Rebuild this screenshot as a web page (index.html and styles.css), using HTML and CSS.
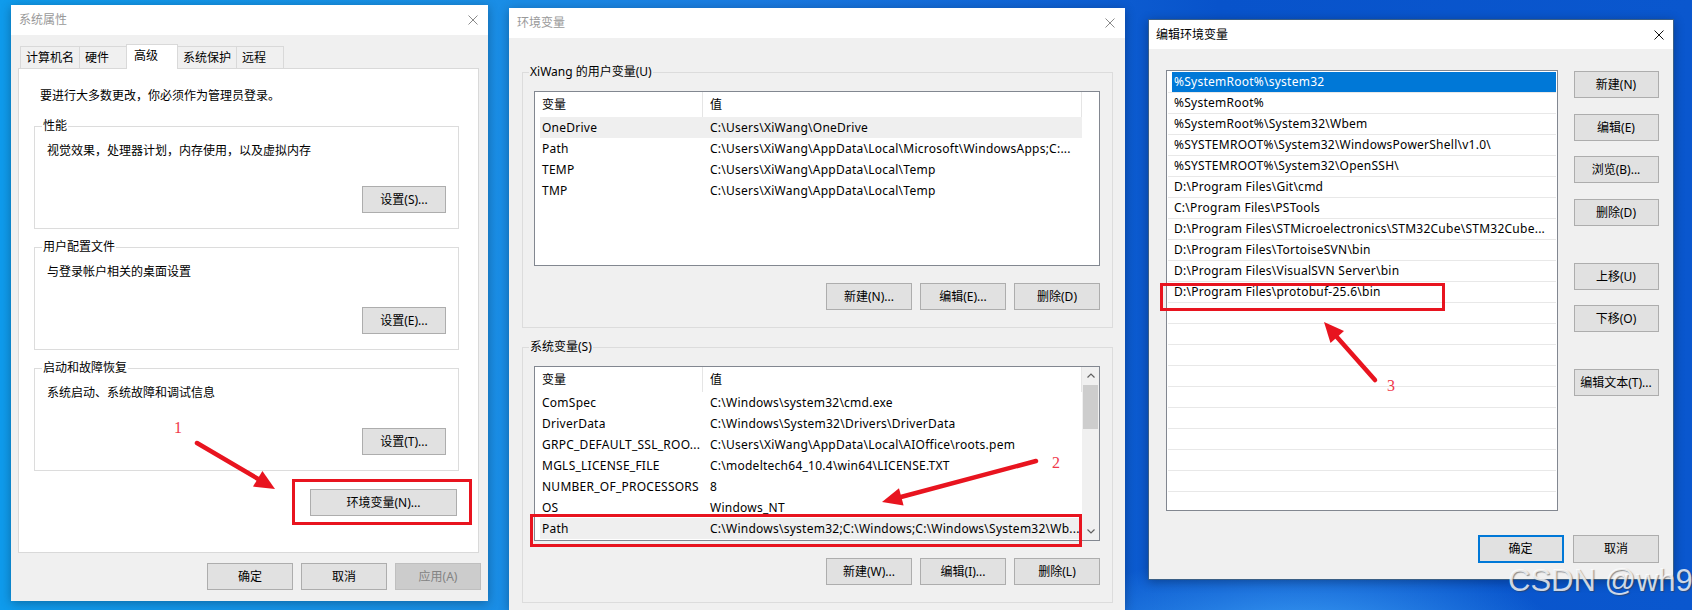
FILE: index.html
```html
<!DOCTYPE html>
<html lang="zh-CN">
<head>
<meta charset="utf-8">
<title>环境变量</title>
<link rel="stylesheet" href="styles.css">
</head>
<body>
<section class="win w1">
  <header class="titlebar"><span>系统属性</span><svg class="x" viewBox="0 0 10 10"><path d="M0.5 0.5L9.5 9.5M9.5 0.5L0.5 9.5"/></svg></header>
  <div class="wbody">
    <nav class="tabs"><span class="tab">计算机名</span><span class="tab">硬件</span><span class="tab sel">高级</span><span class="tab">系统保护</span><span class="tab">远程</span></nav>
    <div class="panel">
      <p class="note">要进行大多数更改，你必须作为管理员登录。</p>
      <fieldset class="grp"><legend>性能</legend><p>视觉效果，处理器计划，内存使用，以及虚拟内存</p><div class="brow"><button class="btn">设置(S)...</button></div></fieldset>
      <fieldset class="grp"><legend>用户配置文件</legend><p>与登录帐户相关的桌面设置</p><div class="brow"><button class="btn">设置(E)...</button></div></fieldset>
      <fieldset class="grp"><legend>启动和故障恢复</legend><p>系统启动、系统故障和调试信息</p><div class="brow"><button class="btn">设置(T)...</button></div></fieldset>
      <div class="envrow"><button class="btn env">环境变量(N)...</button></div>
    </div>
    <div class="foot"><button class="btn">确定</button><button class="btn">取消</button><button class="btn" disabled>应用(A)</button></div>
  </div>
</section>

<section class="win w2">
  <header class="titlebar"><span>环境变量</span><svg class="x" viewBox="0 0 10 10"><path d="M0.5 0.5L9.5 9.5M9.5 0.5L0.5 9.5"/></svg></header>
  <div class="wbody">
    <fieldset class="vgrp"><legend>XiWang 的用户变量(U)</legend>
      <div class="list">
        <div class="lv">
          <div class="row hdr"><span class="c1">变量</span><span class="c2">值</span></div>
          <div class="row hl"><span class="c1">OneDrive</span><span class="c2">C:\Users\XiWang\OneDrive</span></div>
          <div class="row"><span class="c1">Path</span><span class="c2">C:\Users\XiWang\AppData\Local\Microsoft\WindowsApps;C:...</span></div>
          <div class="row"><span class="c1">TEMP</span><span class="c2">C:\Users\XiWang\AppData\Local\Temp</span></div>
          <div class="row"><span class="c1">TMP</span><span class="c2">C:\Users\XiWang\AppData\Local\Temp</span></div>
        </div>
      </div>
      <div class="vbtns"><button class="btn">新建(N)...</button><button class="btn">编辑(E)...</button><button class="btn">删除(D)</button></div>
    </fieldset>
    <fieldset class="vgrp"><legend>系统变量(S)</legend>
      <div class="list">
        <div class="lv">
          <div class="row hdr"><span class="c1">变量</span><span class="c2">值</span></div>
          <div class="row"><span class="c1">ComSpec</span><span class="c2">C:\Windows\system32\cmd.exe</span></div>
          <div class="row"><span class="c1">DriverData</span><span class="c2">C:\Windows\System32\Drivers\DriverData</span></div>
          <div class="row"><span class="c1">GRPC_DEFAULT_SSL_ROO...</span><span class="c2">C:\Users\XiWang\AppData\Local\AIOffice\roots.pem</span></div>
          <div class="row"><span class="c1">MGLS_LICENSE_FILE</span><span class="c2">C:\modeltech64_10.4\win64\LICENSE.TXT</span></div>
          <div class="row"><span class="c1">NUMBER_OF_PROCESSORS</span><span class="c2">8</span></div>
          <div class="row"><span class="c1">OS</span><span class="c2">Windows_NT</span></div>
          <div class="row hl"><span class="c1">Path</span><span class="c2">C:\Windows\system32;C:\Windows;C:\Windows\System32\Wb...</span></div>
        </div>
        <div class="sb">
          <span class="arr"><svg viewBox="0 0 8 5"><path d="M0.5 4.5L4 1L7.5 4.5"/></svg></span>
          <span class="thumb"></span>
          <span class="fill"></span>
          <span class="arr"><svg viewBox="0 0 8 5"><path d="M0.5 0.5L4 4L7.5 0.5"/></svg></span>
        </div>
      </div>
      <div class="vbtns"><button class="btn">新建(W)...</button><button class="btn">编辑(I)...</button><button class="btn">删除(L)</button></div>
    </fieldset>
  </div>
</section>

<section class="win w3">
  <header class="titlebar"><span>编辑环境变量</span><svg class="x" viewBox="0 0 10 10"><path d="M0.5 0.5L9.5 9.5M9.5 0.5L0.5 9.5"/></svg></header>
  <div class="wbody">
    <div class="top">
      <div class="plist">
        <div class="pr sel"><span>%SystemRoot%\system32</span></div>
        <div class="pr"><span>%SystemRoot%</span></div>
        <div class="pr"><span>%SystemRoot%\System32\Wbem</span></div>
        <div class="pr"><span>%SYSTEMROOT%\System32\WindowsPowerShell\v1.0\</span></div>
        <div class="pr"><span>%SYSTEMROOT%\System32\OpenSSH\</span></div>
        <div class="pr"><span>D:\Program Files\Git\cmd</span></div>
        <div class="pr"><span>C:\Program Files\PSTools</span></div>
        <div class="pr"><span>D:\Program Files\STMicroelectronics\STM32Cube\STM32Cube...</span></div>
        <div class="pr"><span>D:\Program Files\TortoiseSVN\bin</span></div>
        <div class="pr"><span>D:\Program Files\VisualSVN Server\bin</span></div>
        <div class="pr"><span>D:\Program Files\protobuf-25.6\bin</span></div>
        <div class="pr"><span></span></div>
        <div class="pr"><span></span></div>
        <div class="pr"><span></span></div>
        <div class="pr"><span></span></div>
        <div class="pr"><span></span></div>
        <div class="pr"><span></span></div>
        <div class="pr"><span></span></div>
        <div class="pr"><span></span></div>
        <div class="pr"><span></span></div>
      </div>
      <div class="side">
        <button class="btn">新建(N)</button>
        <button class="btn">编辑(E)</button>
        <button class="btn">浏览(B)...</button>
        <button class="btn">删除(D)</button>
        <button class="btn sp">上移(U)</button>
        <button class="btn">下移(O)</button>
        <button class="btn sp">编辑文本(T)...</button>
      </div>
    </div>
    <div class="foot3"><button class="btn def">确定</button><button class="btn">取消</button></div>
  </div>
</section>

<svg class="marks" viewBox="0 0 1692 610">
  <rect x="293.5" y="480.5" width="177" height="43"/>
  <rect x="531.5" y="515.5" width="549" height="30"/>
  <rect x="1161.5" y="284.5" width="282" height="25"/>
  <line x1="197" y1="443" x2="259" y2="479.5"/>
  <polygon points="275,489 253,486.6 262.4,471"/>
  <line x1="1036" y1="461" x2="899" y2="497.5"/>
  <polygon points="882,502 899,488.2 903.6,505.6"/>
  <line x1="1375" y1="380" x2="1336" y2="336"/>
  <polygon points="1324,322 1344,331.1 1330.5,343"/>
  <text x="178" y="433">1</text>
  <text x="1056" y="468">2</text>
  <text x="1391" y="391">3</text>
</svg>

<div class="wm">CSDN @wh9</div>
</body>
</html>
```

FILE: styles.css
```css
* { box-sizing: border-box; }
html, body { margin: 0; padding: 0; }
body {
  width: 1692px;
  height: 610px;
  overflow: hidden;
  position: relative;
  font: 12px/16px "Noto Sans", "Noto Sans CJK SC", sans-serif;
  color: #000;
  background:
    radial-gradient(ellipse 260px 90px at 1300px 640px, rgba(70, 175, 255, 0.85), rgba(70, 175, 255, 0) 100%),
    linear-gradient(90deg, #0f9bec 0%, #1a8fe6 28%, #1a7ae0 45%, #0f62d4 62%, #0853cb 72%, #0a57ce 100%);
}
p { margin: 0; }

.win {
  position: absolute;
  background: #f0f0f0;
  display: flex;
  flex-direction: column;
  box-shadow: 0 2px 10px rgba(0, 0, 0, 0.3);
}
.w1 { left: 11px; top: 5px; width: 477px; height: 596px; }
.w2 { left: 509px; top: 8px; width: 616px; height: 602px; }
.w3 { left: 1148px; top: 19px; width: 526px; height: 561px; border: 1px solid #3a5f86; }

.titlebar {
  height: 30px;
  flex: none;
  background: #fff;
  display: flex;
  align-items: center;
  justify-content: space-between;
  padding: 0 10px 0 8px;
  color: #999;
}
.titlebar .x { width: 10px; height: 10px; display: block; }
.titlebar .x path { stroke: #8a8a8a; stroke-width: 1; fill: none; }
.w3 .titlebar { height: 29px; padding: 0 9px 0 7px; color: #000; }
.w3 .titlebar .x path { stroke: #111; }

.btn {
  font: inherit;
  color: #000;
  background: #e1e1e1;
  border: 1px solid #adadad;
  padding: 0;
  margin: 0;
  height: 27px;
  width: 86px;
  line-height: 25px;
  text-align: center;
}
.btn:disabled { background: #cccccc; border-color: #bfbfbf; color: #838383; }

/* ---------- window 1 ---------- */
.w1 .wbody { flex: 1; display: flex; flex-direction: column; padding: 9px 9px 0 7px; }
.tabs {
  display: flex;
  align-items: flex-end;
  height: 25px;
  margin-bottom: -1px;
  padding-left: 2px;
  position: relative;
  z-index: 1;
}
.tab {
  height: 22px;
  margin: 0 0 1px -1px;
  min-width: 48px;
  padding: 0 5px;
  border: 1px solid #d9d9d9;
  border-bottom: none;
  background: #f0f0f0;
  line-height: 21px;
  white-space: nowrap;
}
.tab:first-child { margin-left: 0; }
.tab.sel {
  height: 25px;
  margin-bottom: 0;
  min-width: 52px;
  padding-left: 7px;
  background: #fff;
  position: relative;
  z-index: 1;
}
.panel {
  background: #fff;
  border: 1px solid #d9d9d9;
  height: 485px;
  padding: 19px 19px 0 15px;
  display: flex;
  flex-direction: column;
}
.note { padding-left: 6px; margin-bottom: 14px; }
.grp {
  margin: 0;
  min-width: 0;
  border: 1px solid #dcdcdc;
  padding: 9px 12px 15px;
}
.grp + .grp { margin-top: 10px; }
legend { padding: 0 1px; margin-left: -5px; line-height: 16px; }
.brow { display: flex; justify-content: flex-end; margin-top: 27px; }
.brow .btn { width: 84px; }
.envrow { display: flex; justify-content: flex-end; margin-top: 18px; padding-right: 2px; }
.btn.env { width: 147px; }
.foot { display: flex; justify-content: flex-end; gap: 8px; margin: 10px -2px 0 0; }

/* ---------- window 2 ---------- */
.w2 .wbody { flex: 1; padding: 26px 12px 0 13px; }
.vgrp {
  margin: 0;
  min-width: 0;
  border: 1px solid #dcdcdc;
  padding: 11px 12px 17px 11px;
}
.vgrp + .vgrp { margin-top: 11px; }
.list {
  height: 175px;
  border: 1px solid #828790;
  background: #fff;
  display: flex;
}
.lv { flex: 1; padding-left: 5px; overflow: hidden; }
.row { display: flex; width: 542px; height: 21px; line-height: 21px; white-space: nowrap; letter-spacing: 0.25px; }
.row.hl { background: #efefef; }
.row.hdr { height: 25px; line-height: 25px; letter-spacing: 0; }
.c1 { width: 163px; flex: none; padding-left: 2px; overflow: hidden; }
.c2 { flex: 1; padding-left: 7px; overflow: hidden; }
.hdr .c1 { border-right: 1px solid #e5e5e5; }
.hdr .c2 { border-right: 1px solid #e5e5e5; }
.sb { width: 17px; flex: none; display: flex; flex-direction: column; background: #f0f0f0; }
.arr { height: 17px; display: flex; align-items: center; justify-content: center; }
.arr svg { width: 8px; height: 5px; display: block; }
.arr path { stroke: #606060; stroke-width: 1.2; fill: none; }
.thumb { height: 44px; margin: 1px 1px 0; background: #cdcdcd; }
.fill { flex: 1; }
.vbtns { display: flex; justify-content: flex-end; gap: 8px; margin-top: 17px; }

/* ---------- window 3 ---------- */
.w3 .wbody { flex: 1; display: flex; flex-direction: column; padding: 21px 14px 0 17px; }
.top { display: flex; }
.plist {
  width: 392px;
  height: 441px;
  border: 1px solid #828790;
  background: #fff;
  padding: 1px;
}
.pr {
  height: 21px;
  border-bottom: 1px solid #e8e8e8;
  padding-left: 4px;
  display: flex;
  white-space: nowrap;
  overflow: hidden;
  letter-spacing: 0.25px;
}
.pr span { flex: 1; padding-left: 2px; line-height: 20px; }
.pr.sel span { background: #0078d7; color: #fff; }
.side {
  width: 85px;
  margin: 1px 0 0 15.5px;
  display: flex;
  flex-direction: column;
  gap: 15.5px;
}
.side .btn { width: 85px; }
.side .sp { margin-top: 21.5px; }
.foot3 { display: flex; justify-content: flex-end; gap: 9.5px; margin-top: 24px; }
.foot3 .btn { height: 28px; line-height: 26px; }
.btn.def { border: 2px solid #0078d7; line-height: 24px; }

/* ---------- annotations ---------- */
.marks {
  position: absolute;
  left: 0;
  top: 0;
  width: 1692px;
  height: 610px;
  z-index: 10;
  pointer-events: none;
}
.marks rect { fill: none; stroke: #e8141f; stroke-width: 3; }
.marks line { stroke: #e8141f; stroke-width: 4.5; stroke-linecap: round; }
.marks polygon { fill: #e8141f; }
.marks text {
  font-family: "Liberation Serif", serif;
  font-size: 16px;
  fill: #f0384a;
  text-anchor: middle;
}
.wm {
  position: absolute;
  left: 1508px;
  top: 565px;
  z-index: 11;
  font: 31px/31px "Liberation Sans", Arial, sans-serif;
  color: rgba(255, 255, 255, 0.78);
  text-shadow: 1px 1px 1px rgba(60, 60, 60, 0.55);
  white-space: nowrap;
}
```
